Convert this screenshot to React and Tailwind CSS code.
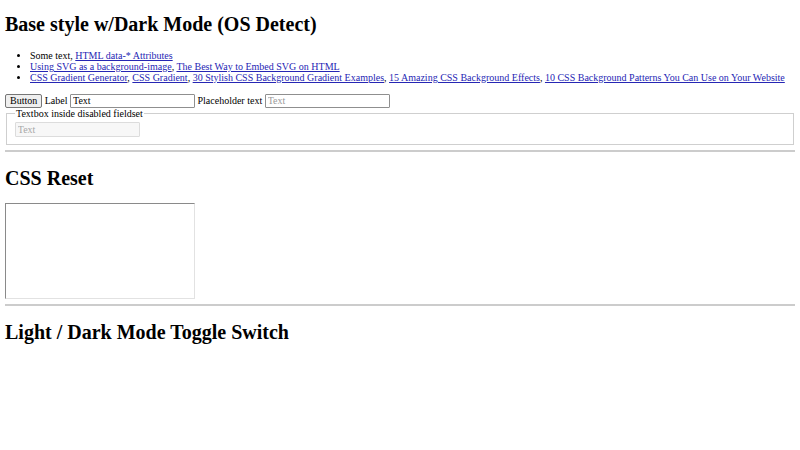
export default function App() {
  return (
    <div className="min-h-screen bg-white px-[5px] font-['Liberation_Serif',serif] text-[10px] leading-[11.5px] text-black">
      <h1 className="my-[13.4px] text-[20px] font-bold leading-[23px]">Base style w/Dark Mode (OS Detect)</h1>

      <ul className="my-[10px] list-disc pl-[25px] leading-[11px]">
        <li>
          Some text, <a href="#" className="text-[#2626b4] underline">HTML data-* Attributes</a>
        </li>
        <li>
          <a href="#" className="text-[#2626b4] underline">Using SVG as a background-image</a>,{" "}
          <a href="#" className="text-[#2626b4] underline">The Best Way to Embed SVG on HTML</a>
        </li>
        <li>
          <a href="#" className="text-[#2626b4] underline">CSS Gradient Generator</a>,{" "}
          <a href="#" className="text-[#2626b4] underline">CSS Gradient</a>,{" "}
          <a href="#" className="text-[#2626b4] underline">30 Stylish CSS Background Gradient Examples</a>,{" "}
          <a href="#" className="text-[#2626b4] underline">15 Amazing CSS Background Effects</a>,{" "}
          <a href="#" className="text-[#2626b4] underline">10 CSS Background Patterns You Can Use on Your Website</a>
        </li>
      </ul>

      {/* controls row */}
      <div className="flex h-[15px] items-start gap-[2.5px] pt-[1px]">
        <button className="h-[14px] rounded-[2px] border border-[#767676] bg-[#efefef] px-[4px] text-[10px] leading-[12px]">
          Button
        </button>
        <label className="leading-[14px]">Label</label>
        <input
          defaultValue="Text"
          className="h-[14px] w-[125px] rounded-[1px] border border-[#8f8f8f] px-[2px] text-[10px] leading-[12px] outline-none"
        />
        <span className="leading-[14px]">Placeholder text</span>
        <input
          placeholder="Text"
          className="h-[14px] w-[125px] rounded-[1px] border border-[#8f8f8f] px-[2px] text-[10px] leading-[12px] outline-none placeholder:text-[#9a9a9a]"
        />
      </div>

      <fieldset disabled className="mx-[1.25px] border-[1.5px] border-[#cfcfcf] px-[7.5px] pt-[3px] pb-[7px]">
        <legend className="px-[1.25px] leading-[11.5px]">Textbox inside disabled fieldset</legend>
        <input
          placeholder="Text"
          className="block h-[15px] w-[125px] rounded-[1px] border border-[#dcdcdc] bg-[#f7f7f7] px-[2px] text-[10px] outline-none placeholder:text-[#a8a8a8]"
        />
      </fieldset>

      <hr className="my-[5px] border-t-2 border-[#cccccc]" />

      <h1 className="mt-[14.6px] mb-[13.4px] text-[20px] font-bold leading-[23px]">CSS Reset</h1>

      <div className="mb-[5px] h-[96px] w-[190px] border-[1.25px] border-t-[#8a8a8a] border-r-[#e2e2e2] border-b-[#e2e2e2] border-l-[#8a8a8a]" />

      <hr className="my-[5px] border-t-2 border-[#cccccc]" />

      <h1 className="mt-[14.6px] mb-[13.4px] text-[20px] font-bold leading-[23px]">Light / Dark Mode Toggle Switch</h1>
    </div>
  );
}
